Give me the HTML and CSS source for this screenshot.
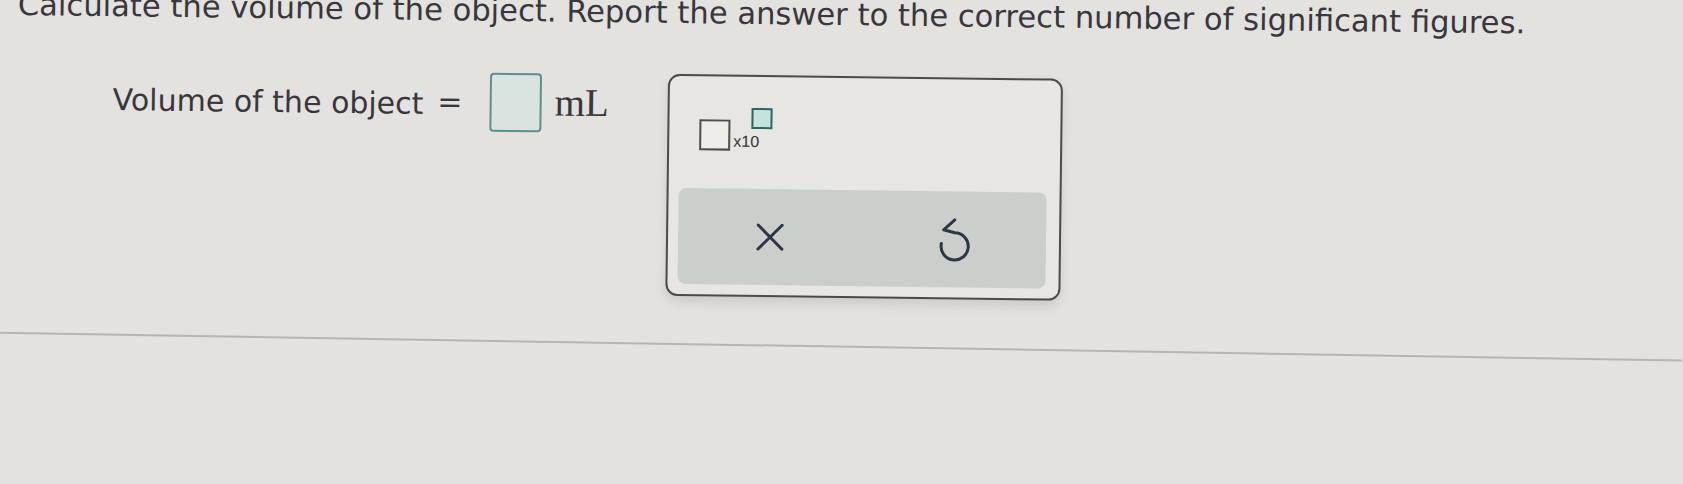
FILE: index.html
```html
<!DOCTYPE html>
<html lang="en">
<head>
<meta charset="utf-8">
<title>Volume of the object</title>
<link rel="stylesheet" href="styles.css">
</head>
<body>
<div class="page">
  <p class="prompt">Calculate the volume of the object. Report the answer to the correct number of significant figures.</p>

  <div class="work">
    <div class="question">
      <span class="label">Volume of the object</span>
      <span class="eq">=</span>
      <span class="answer-box"></span>
      <span class="unit">mL</span>
    </div>

    <div class="palette">
      <div class="templates">
        <div class="sci">
          <span class="sci-base"></span>
          <span class="sci-x">x10</span>
          <span class="sci-exp"></span>
        </div>
      </div>
      <div class="actions">
        <button class="action" type="button" aria-label="Clear">
          <svg class="icon-x" width="28" height="28" viewBox="0 0 28 28">
            <path d="M2 2 L26 26 M26 2 L2 26" fill="none" stroke="#2b3742" stroke-width="3" stroke-linecap="round"/>
          </svg>
        </button>
        <button class="action" type="button" aria-label="Undo">
          <svg class="icon-undo" width="36" height="45" viewBox="0 0 36 45">
            <path d="M18.5 2.5 L7.5 12.5 L18.7 15.4 A13.6 13.6 0 1 1 5.4 26.2" fill="none" stroke="#2b3742" stroke-width="3" stroke-linecap="round" stroke-linejoin="round"/>
          </svg>
        </button>
      </div>
    </div>
  </div>

  <div class="rule"></div>
</div>
</body>
</html>
```

FILE: styles.css
```css
html, body {
  margin: 0;
  padding: 0;
  background: #e4e2de;
  overflow: hidden;
}

body {
  width: 1683px;
  height: 484px;
}

.page {
  width: 1683px;
  height: 484px;
  background: #e4e2de;
  transform: rotate(0.7deg);
  transform-origin: 841px 242px;
  font-family: "DejaVu Sans", Verdana, sans-serif;
  color: #37373d;
}

.prompt {
  margin: 0;
  padding-left: 15px;
  font-size: 30.6px;
  line-height: 30px;
  white-space: nowrap;
}

.work {
  display: flex;
  align-items: flex-start;
  margin-top: 42px;
  padding-left: 111px;
}

.question {
  display: flex;
  align-items: flex-start;
  margin-top: 5px;
}

.label {
  font-size: 30px;
  line-height: 30px;
  margin-top: 17px;
}

.eq {
  font-size: 30px;
  line-height: 30px;
  margin-top: 15px;
  margin-left: 14px;
}

.answer-box {
  width: 48px;
  height: 55px;
  margin-left: 27px;
  border: 2px solid #5b918d;
  border-radius: 4px;
  background: #d9e4e0;
}

.unit {
  font-family: "Liberation Serif", "Times New Roman", serif;
  font-size: 39px;
  line-height: 40px;
  margin-top: 9px;
  margin-left: 13px;
}

.palette {
  box-sizing: border-box;
  width: 395px;
  height: 222px;
  margin-left: 59px;
  margin-top: 4px;
  padding: 12px 13px 10px 10px;
  border: 2px solid #4a4a4a;
  border-radius: 12px;
  background: #e7e6e2;
  box-shadow: 0 6px 12px rgba(0, 0, 0, 0.10);
  display: flex;
  flex-direction: column;
}

.templates {
  height: 100px;
  padding: 19px 0 0 20px;
  box-sizing: border-box;
}

.sci {
  display: flex;
  align-items: flex-start;
  font-family: "Liberation Sans", Arial, sans-serif;
}

.sci-base {
  width: 27px;
  height: 27px;
  margin-top: 12px;
  border: 2px solid #4d4d4d;
  background: #eeede9;
}

.sci-x {
  font-size: 16px;
  line-height: 16px;
  margin-top: 26px;
  margin-left: 3px;
  color: #333;
}

.sci-exp {
  width: 17px;
  height: 17px;
  margin-left: -8px;
  border: 2px solid #2f6663;
  background: #c6e2dc;
}

.actions {
  flex: 1;
  display: grid;
  grid-template-columns: 1fr 1fr;
  background: #cbcfcc;
  border-radius: 8px;
}

.action {
  display: flex;
  align-items: center;
  justify-content: center;
  border: 0;
  padding: 0;
  background: transparent;
}

.icon-undo {
  margin-top: 0;
}

.rule {
  margin-top: 44px;
  height: 2px;
  background: #b6b4b1;
  transform: rotate(0.25deg);
  transform-origin: 0 0;
}
```
